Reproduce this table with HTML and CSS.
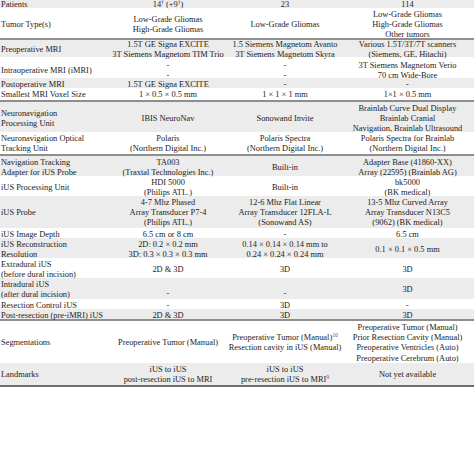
FILE: index.html
```html
<!DOCTYPE html>
<html>
<head>
<meta charset="utf-8">
<link rel="stylesheet" href="styles.css">
</head>
<body>
<div class="table">
  <div class="row gray h10 first">
    <div class="lab">Patients</div>
    <div class="c"><span>14<sup class="dag">†</sup> (+9<sup class="dag">†</sup>)</span></div>
    <div class="c"><span>23</span></div>
    <div class="c"><span>114</span></div>
  </div>
  <div class="row h30">
    <div class="lab">Tumor Type(s)</div>
    <div class="c"><span>Low-Grade Gliomas<br>High-Grade Gliomas</span></div>
    <div class="c"><span>Low-Grade Gliomas</span></div>
    <div class="c"><span>Low-Grade Gliomas<br>High-Grade Gliomas<br>Other tumors</span></div>
  </div>
  <div class="rule"></div>
  <div class="row gray h17 raise">
    <div class="lab">Preoperative MRI</div>
    <div class="c"><span>1.5T GE Signa EXCITE<br>3T Siemens Magnetom TIM Trio</span></div>
    <div class="c"><span>1.5 Siemens Magnetom Avanto<br>3T Siemens Magnetom Skyra</span></div>
    <div class="c"><span>Various 1.5T/3T/7T scanners<br>(Siemens, GE, Hitachi)</span></div>
  </div>
  <div class="row h21 lower">
    <div class="lab">Intraoperative MRI (iMRI)</div>
    <div class="c"><span>-<br>-</span></div>
    <div class="c"><span>-<br>-</span></div>
    <div class="c"><span>3T Siemens Magnetom Verio<br>70 cm Wide-Bore</span></div>
  </div>
  <div class="row gray h10">
    <div class="lab">Postoperative MRI</div>
    <div class="c"><span>1.5T GE Signa EXCITE</span></div>
    <div class="c"><span>-</span></div>
    <div class="c"><span>-</span></div>
  </div>
  <div class="row h12">
    <div class="lab">Smallest MRI Voxel Size</div>
    <div class="c"><span>1 × 0.5 × 0.5 mm</span></div>
    <div class="c"><span>1 × 1 × 1 mm</span></div>
    <div class="c"><span>1×1 × 0.5 mm</span></div>
  </div>
  <div class="rule"></div>
  <div class="row gray h30">
    <div class="lab">Neuronavigation<br>Processing Unit</div>
    <div class="c"><span>IBIS NeuroNav</span></div>
    <div class="c"><span>Sonowand Invite</span></div>
    <div class="c"><span>Brainlab Curve Dual Display<br>Brainlab Cranial<br>Navigation, Brainlab Ultrasound</span></div>
  </div>
  <div class="row h22">
    <div class="lab">Neuronavigation Optical<br>Tracking Unit</div>
    <div class="c"><span>Polaris<br>(Northern Digital Inc.)</span></div>
    <div class="c"><span>Polaris Spectra<br>(Northern Digital Inc.)</span></div>
    <div class="c"><span>Polaris Spectra for Brainlab<br>(Northern Digital Inc.)</span></div>
  </div>
  <div class="rule"></div>
  <div class="row gray h20">
    <div class="lab">Navigation Tracking<br>Adapter for iUS Probe</div>
    <div class="c"><span>TA003<br>(Traxtal Technologies Inc.)</span></div>
    <div class="c"><span>Built-in</span></div>
    <div class="c"><span>Adapter Base (41860-XX)<br>Array (22595) (Brainlab AG)</span></div>
  </div>
  <div class="row h20">
    <div class="lab">iUS Processing Unit</div>
    <div class="c"><span>HDI 5000<br>(Philips ATL.)</span></div>
    <div class="c"><span>Built-in</span></div>
    <div class="c"><span>bk5000<br>(BK medical)</span></div>
  </div>
  <div class="row gray h32">
    <div class="lab">iUS Probe</div>
    <div class="c"><span>4-7 Mhz Phased<br>Array Transducer P7-4<br>(Philips ATL.)</span></div>
    <div class="c"><span>12-6 Mhz Flat Linear<br>Array Transducer 12FLA-L<br>(Sonowand AS)</span></div>
    <div class="c"><span>13-5 Mhz Curved Array<br>Array Transducer N13C5<br>(9062) (BK medical)</span></div>
  </div>
  <div class="row h10">
    <div class="lab">iUS Image Depth</div>
    <div class="c"><span>6.5 cm or 8 cm</span></div>
    <div class="c"><span>-</span></div>
    <div class="c"><span>6.5 cm</span></div>
  </div>
  <div class="row gray h20">
    <div class="lab">iUS Reconstruction<br>Resolution</div>
    <div class="c"><span>2D: 0.2 × 0.2 mm<br>3D: 0.3 × 0.3 × 0.3 mm</span></div>
    <div class="c"><span>0.14 × 0.14 × 0.14 mm to<br>0.24 × 0.24 × 0.24 mm</span></div>
    <div class="c"><span>0.1 × 0.1 × 0.5 mm</span></div>
  </div>
  <div class="row h20">
    <div class="lab">Extradural iUS<br>(before dural incision)</div>
    <div class="c"><span>2D &amp; 3D</span></div>
    <div class="c"><span>3D</span></div>
    <div class="c"><span>3D</span></div>
  </div>
  <div class="row gray h21">
    <div class="lab">Intradural iUS<br>(after dural incision)</div>
    <div class="c low"><span>-</span></div>
    <div class="c low"><span>-</span></div>
    <div class="c"><span>3D</span></div>
  </div>
  <div class="row h10">
    <div class="lab">Resection Control iUS</div>
    <div class="c"><span>-</span></div>
    <div class="c"><span>3D</span></div>
    <div class="c"><span>-</span></div>
  </div>
  <div class="row gray h10">
    <div class="lab">Post-resection (pre-iMRI) iUS</div>
    <div class="c"><span>2D &amp; 3D</span></div>
    <div class="c"><span>3D</span></div>
    <div class="c"><span>3D</span></div>
  </div>
  <div class="rule"></div>
  <div class="row h42">
    <div class="lab">Segmentations</div>
    <div class="c"><span>Preoperative Tumor (Manual)</span></div>
    <div class="c"><span>Preoperative Tumor (Manual)<sup class="ref">10</sup><br>Resection cavity in iUS (Manual)</span></div>
    <div class="c"><span>Preoperative Tumor (Manual)<br>Prior Resection Cavity (Manual)<br>Preoperative Ventricles (Auto)<br>Preoperative Cerebrum (Auto)</span></div>
  </div>
  <div class="row gray h22">
    <div class="lab">Landmarks</div>
    <div class="c"><span>iUS to iUS<br>post-resection iUS to MRI</span></div>
    <div class="c"><span>iUS to iUS<br>pre-resection iUS to MRI<sup class="ref">9</sup></span></div>
    <div class="c"><span>Not yet available</span></div>
  </div>
  <div class="rule bottom"></div>
</div>
</body>
</html>
```

FILE: styles.css
```css
html, body {
  margin: 0;
  padding: 0;
  background: #ffffff;
}

body {
  width: 474px;
  height: 474px;
  overflow: hidden;
  font-family: "Liberation Serif", "Times New Roman", serif;
  font-size: 8.4px;
  line-height: 10.2px;
  color: #1c1c1c;
}

.table {
  display: flex;
  flex-direction: column;
  width: 474px;
}

.row {
  display: grid;
  grid-template-columns: 110px 116px 118px 127px;
  align-items: center;
  white-space: nowrap;
}

.row.first {
  margin-top: -2px;
}

.gray {
  background: #ececec;
}

.h10 { height: 10px; }
.h12 { height: 12px; }
.h17 { height: 17px; }
.h20 { height: 20px; }
.h21 { height: 21px; }
.h22 { height: 22px; }
.h30 { height: 30px; }
.h32 { height: 32px; }
.h42 { height: 42px; }

.lab {
  position: relative;
  padding-left: 1px;
  padding-top: 2px;
  text-align: left;
}

.c {
  position: relative;
  display: flex;
  flex-direction: column;
  align-items: center;
  justify-content: center;
  text-align: center;
  height: 100%;
  box-sizing: border-box;
  padding-top: 2px;
}

.raise .lab,
.raise .c {
  padding-top: 0;
}

.lower .lab,
.lower .c {
  padding-top: 4px;
}

.c.low {
  padding-top: 9px;
}

.rule {
  height: 2px;
  background: #8e8e8e;
  width: 474px;
}

.rule.bottom {
  background: #6e6e6e;
}

sup {
  font-size: 5.6px;
  line-height: 0;
  vertical-align: 3px;
}

.ref {
  color: #4a4ab8;
}
```
